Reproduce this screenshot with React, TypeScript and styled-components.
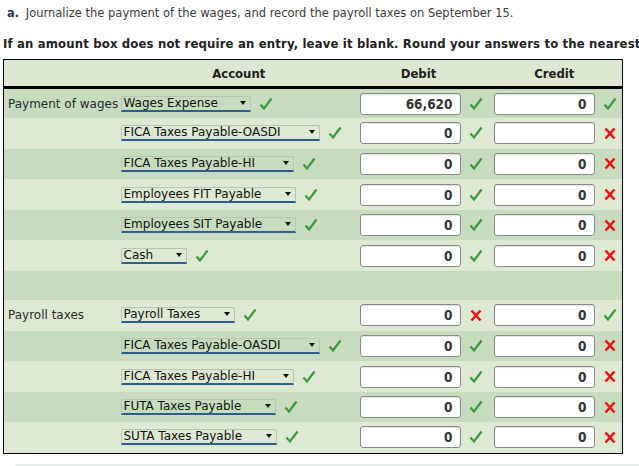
import styled, { createGlobalStyle } from "styled-components";

type Mark = "ok" | "bad";

type EntryRow = {
  label?: string;
  account?: string;
  width?: number;
  accountMark?: Mark;
  debit?: string;
  debitMark?: Mark;
  credit?: string;
  creditMark?: Mark;
  blank?: boolean;
};

const rows: EntryRow[] = [
  { label: "Payment of wages", account: "Wages Expense", width: 130, accountMark: "ok", debit: "66,620", debitMark: "ok", credit: "0", creditMark: "ok" },
  { account: "FICA Taxes Payable-OASDI", width: 199, accountMark: "ok", debit: "0", debitMark: "ok", credit: "", creditMark: "bad" },
  { account: "FICA Taxes Payable-HI", width: 173, accountMark: "ok", debit: "0", debitMark: "ok", credit: "0", creditMark: "bad" },
  { account: "Employees FIT Payable", width: 175, accountMark: "ok", debit: "0", debitMark: "ok", credit: "0", creditMark: "bad" },
  { account: "Employees SIT Payable", width: 175, accountMark: "ok", debit: "0", debitMark: "ok", credit: "0", creditMark: "bad" },
  { account: "Cash", width: 66, accountMark: "ok", debit: "0", debitMark: "ok", credit: "0", creditMark: "bad" },
  { blank: true },
  { label: "Payroll taxes", account: "Payroll Taxes", width: 114, accountMark: "ok", debit: "0", debitMark: "bad", credit: "0", creditMark: "ok" },
  { account: "FICA Taxes Payable-OASDI", width: 199, accountMark: "ok", debit: "0", debitMark: "ok", credit: "0", creditMark: "bad" },
  { account: "FICA Taxes Payable-HI", width: 173, accountMark: "ok", debit: "0", debitMark: "ok", credit: "0", creditMark: "bad" },
  { account: "FUTA Taxes Payable", width: 155, accountMark: "ok", debit: "0", debitMark: "ok", credit: "0", creditMark: "bad" },
  { account: "SUTA Taxes Payable", width: 156, accountMark: "ok", debit: "0", debitMark: "ok", credit: "0", creditMark: "bad" },
];

const GlobalStyle = createGlobalStyle`
  body {
    margin: 0;
    background: #ffffff;
    font-family: "DejaVu Sans Condensed", "DejaVu Sans", sans-serif;
    color: #333333;
    overflow: hidden;
  }
`;

const MarkIcon = ({ kind }: { kind?: Mark }) => {
  if (!kind) return <MarkSlot />;
  return (
    <MarkSlot>
      {kind === "ok" ? (
        <svg width="14" height="14" viewBox="0 0 14 14">
          <path d="M1.5 7.5 L5 11.5 L12.5 1.5" fill="none" stroke="#3c9a3c" strokeWidth="2.2" strokeLinejoin="miter" />
        </svg>
      ) : (
        <svg width="12" height="13" viewBox="0 0 12 13">
          <path d="M1.5 1.5 L10.5 11.5 M10.5 1.5 L1.5 11.5" stroke="#ee1111" strokeWidth="2.6" />
        </svg>
      )}
    </MarkSlot>
  );
};

export default function App() {
  return (
    <>
      <GlobalStyle />
      <Page>
        <Lead>
          <strong>a.</strong> Journalize the payment of the wages, and record the payroll taxes on September 15.
        </Lead>
        <Note>
          If an amount box does not require an entry, leave it blank. Round your answers to the nearest
        </Note>
        <Journal>
          <colgroup>
            <col style={{ width: 117 }} />
            <col style={{ width: 230 }} />
            <col style={{ width: 136 }} />
            <col style={{ width: 136 }} />
          </colgroup>
          <thead>
            <tr>
              <AccountHead colSpan={2}>Account</AccountHead>
              <HeadCell>Debit</HeadCell>
              <HeadCell>Credit</HeadCell>
            </tr>
          </thead>
          <tbody>
            {rows.map((r, i) => (
              <Row key={i} $dark={i % 2 === 0} $blank={r.blank}>
                {r.blank ? (
                  <td colSpan={4} />
                ) : (
                  <>
                    <LabelCell>{r.label}</LabelCell>
                    <AccountCell>
                      <Inline>
                        <SelectBox style={{ width: r.width }}>
                          <span>{r.account}</span>
                          <Caret />
                        </SelectBox>
                        <MarkIcon kind={r.accountMark} />
                      </Inline>
                    </AccountCell>
                    <AmountCell $pad={9}>
                      <Inline>
                        <Amount>{r.debit}</Amount>
                        <MarkIcon kind={r.debitMark} />
                      </Inline>
                    </AmountCell>
                    <AmountCell $pad={7}>
                      <Inline>
                        <Amount>{r.credit}</Amount>
                        <MarkIcon kind={r.creditMark} />
                      </Inline>
                    </AmountCell>
                  </>
                )}
              </Row>
            ))}
          </tbody>
        </Journal>
        <Footer />
      </Page>
    </>
  );
}

const Page = styled.div`
  width: 639px;
  height: 466px;
  padding: 4px 0 0 3px;
  box-sizing: border-box;
  white-space: nowrap;
`;

const Lead = styled.div`
  font-family: "DejaVu Sans", sans-serif;
  font-size: 11.5px;
  color: #3a3a3a;
  padding-left: 4px;
  height: 18px;
  line-height: 18px;

  & strong {
    color: #1f3557;
    margin-right: 3px;
  }
`;

const Note = styled.div`
  margin-top: 13px;
  font-size: 13px;
  font-weight: bold;
  letter-spacing: 0.15px;
  color: #222222;
  height: 18px;
  line-height: 18px;
`;

const Journal = styled.table`
  margin-top: 6px;
  width: 619px;
  border-collapse: collapse;
  border: 1px solid #000000;
  table-layout: fixed;
`;

const HeadCell = styled.th`
  height: 26px;
  padding: 0;
  background: #dde8d2;
  border-bottom: 3px solid #000000;
  font-size: 13px;
  font-weight: bold;
  color: #222222;
  text-align: center;
`;

const AccountHead = styled(HeadCell)`
  padding-left: 123px;
`;

const Row = styled.tr<{ $dark: boolean; $blank?: boolean }>`
  height: ${(p) => (p.$blank ? "29px" : "30.6px")};
  background: ${(p) => (p.$dark ? "#c7dcbf" : "#dde9d3")};
`;

const LabelCell = styled.td`
  padding: 0 0 0 4px;
  font-family: "DejaVu Sans", sans-serif;
  font-size: 12px;
  color: #2a2a2a;
  overflow: hidden;
`;

const AccountCell = styled.td`
  padding: 0;
`;

const AmountCell = styled.td<{ $pad: number }>`
  padding: 0 0 0 ${(p) => p.$pad}px;
`;

const Inline = styled.div`
  display: flex;
  align-items: center;
`;

const SelectBox = styled.div`
  display: flex;
  align-items: center;
  justify-content: space-between;
  box-sizing: border-box;
  height: 16px;
  padding: 0 4px 1px 2px;
  border: 1px solid #b9c4b2;
  border-bottom: 2px solid #2f5f91;
  border-radius: 2px 2px 0 0;
  font-family: "DejaVu Sans", sans-serif;
  font-size: 12px;
  color: #111111;
  overflow: hidden;
`;

const Caret = styled.span`
  flex-shrink: 0;
  width: 0;
  height: 0;
  border-left: 3px solid transparent;
  border-right: 3px solid transparent;
  border-top: 4px solid #111111;
  margin-left: 4px;
`;

const MarkSlot = styled.span`
  display: inline-flex;
  align-items: center;
  justify-content: center;
  width: 14px;
  height: 14px;
  margin-left: 8px;
`;

const Amount = styled.div`
  box-sizing: border-box;
  width: 101px;
  height: 22px;
  line-height: 20px;
  padding-right: 7px;
  background: #ffffff;
  border: 1px solid #8a8a8a;
  border-radius: 3px;
  box-shadow: inset 0 1px 1px rgba(0, 0, 0, 0.12);
  text-align: right;
  font-size: 13.5px;
  font-weight: bold;
  color: #333333;
`;

const Footer = styled.div`
  margin: 10px 0 0 12px;
  height: 4px;
  border-top: 1px solid #dfe8e8;
  background: #f3f7f7;
`;
